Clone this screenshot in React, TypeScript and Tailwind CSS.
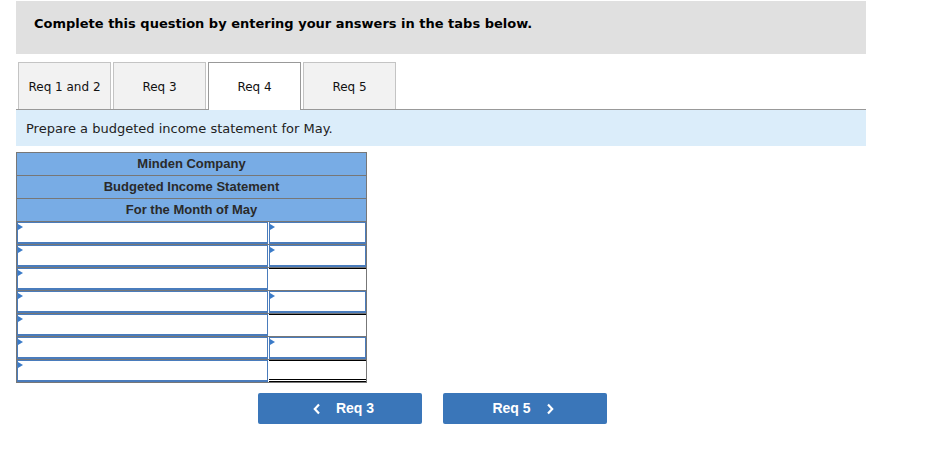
import React from "react";

const verdana = { fontFamily: '"DejaVu Sans", Verdana, sans-serif' };
const arial = { fontFamily: '"Liberation Sans", Arial, sans-serif' };

function Tri() {
  return (
    <span className="absolute left-0 top-[1px] w-0 h-0 border-y-[3px] border-y-transparent border-l-[5px] border-l-[#3b7bc8]" />
  );
}

function LeftInput() {
  return (
    <div className="relative w-[251px] h-full border border-[#4a7cbc] border-b-2 bg-white">
      <Tri />
    </div>
  );
}

type RightKind = "input" | "total" | "final";

function RightCell({ kind }: { kind: RightKind }) {
  if (kind === "input") {
    return (
      <div className="relative flex-1 h-full ml-px border border-[#4a7cbc] border-b-2 bg-white">
        <Tri />
      </div>
    );
  }
  if (kind === "total") {
    return <div className="flex-1 h-full ml-px border-t border-black bg-white" />;
  }
  return (
    <div className="flex-1 h-full ml-px border-t border-black border-b-[3px] border-b-black border-double bg-white" />
  );
}

export default function App() {
  const rows: RightKind[] = ["input", "input", "total", "input", "total", "input", "final"];
  const tabs = ["Req 1 and 2", "Req 3", "Req 4", "Req 5"];
  return (
    <div className="w-[925px] h-[470px] bg-white pl-4" style={verdana}>
      <div className="w-[850px] mt-px h-[53px] bg-[#e0e0e0] pl-[18px] pt-[15px]">
        <p className="text-[13px] font-bold text-black leading-4">
          Complete this question by entering your answers in the tabs below.
        </p>
      </div>

      <div className="w-[850px] mt-2 flex gap-[2px] pl-[2px] border-b border-[#999] h-[48px] items-end">
        {tabs.map((t, i) => {
          const active = i === 2;
          return (
            <div
              key={t}
              className={
                active
                  ? "w-[93px] h-[48px] -mb-px bg-white border border-b-0 border-[#999] flex items-center justify-center text-[12px] text-[#111]"
                  : "w-[93px] h-[47px] pt-[2px] bg-[#f2f2f2] border border-b-0 border-[#c4c4c4] flex items-center justify-center text-[12px] text-[#111]"
              }
            >
              {t}
            </div>
          );
        })}
      </div>

      <div className="w-[850px] h-[36px] bg-[#dbedfa] pl-[10px] pt-px flex items-center">
        <p className="text-[13px] text-[#222]">Prepare a budgeted income statement for May.</p>
      </div>

      <div className="mt-[6px] w-[351px] border border-[#777]" style={arial}>
        {["Minden Company", "Budgeted Income Statement", "For the Month of May"].map((h) => (
          <div
            key={h}
            className="h-[23px] bg-[#78ace5] border-b border-[#777] flex items-center justify-center text-[13px] font-bold text-[#2a2a2a]"
          >
            {h}
          </div>
        ))}
        {rows.map((k, i) => (
          <div key={i} className={i < rows.length - 1 ? "h-[23px] flex border-b border-[#777]" : "h-[22px] flex"}>
            <LeftInput />
            <RightCell kind={k} />
          </div>
        ))}
      </div>

      <div className="mt-[10px] ml-[242px] flex gap-[21px]" style={arial}>
        <button className="w-[164px] h-[31px] pl-[7px] bg-[#3a76b9] rounded-[2px] flex items-center justify-center gap-[15px] text-white font-bold text-[14px]">
          <svg width="8" height="12" viewBox="0 0 8 12" fill="none">
            <path d="M6 1.5L1.8 6L6 10.5" stroke="white" strokeWidth="2.2" />
          </svg>
          <span>Req 3</span>
        </button>
        <button className="w-[164px] h-[31px] pr-[4px] bg-[#3a76b9] rounded-[2px] flex items-center justify-center gap-[15px] text-white font-bold text-[14px]">
          <span>Req 5</span>
          <svg width="8" height="12" viewBox="0 0 8 12" fill="none">
            <path d="M2 1.5L6.2 6L2 10.5" stroke="white" strokeWidth="2.2" />
          </svg>
        </button>
      </div>
    </div>
  );
}
